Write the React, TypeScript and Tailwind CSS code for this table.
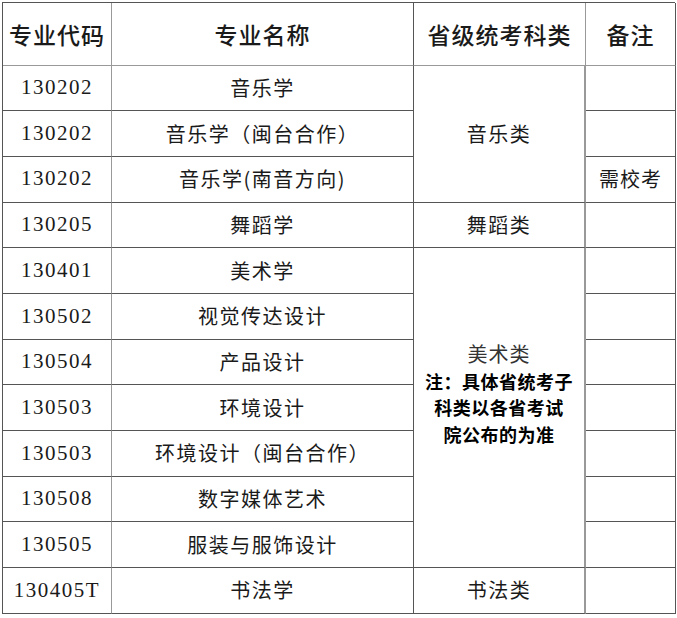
import React from "react"

type Row = {
  code: string
  name: string
  category?: React.ReactNode
  span?: string
  note?: string
}

const cjk = "font-['Noto_Sans_CJK_SC',sans-serif]"
const cell = "flex items-center justify-center border-r border-b border-[#555]"

const rows: Row[] = [
  { code: "130202", name: "音乐学", category: "音乐类", span: "row-span-3" },
  { code: "130202", name: "音乐学（闽台合作）" },
  { code: "130202", name: "音乐学(南音方向)", note: "需校考" },
  { code: "130205", name: "舞蹈学", category: "舞蹈类", span: "row-span-1" },
  {
    code: "130401",
    name: "美术学",
    category: (
      <div className="flex flex-col items-center pb-[28px]">
        <span className="text-[20px] leading-[28px] tracking-[1px] text-[#333]">美术类</span>
        <span className="text-[18px] font-bold leading-[26.5px] tracking-[0.5px] text-black">
          注：具体省统考子
          <br />
          科类以各省考试
          <br />
          院公布的为准
        </span>
      </div>
    ),
    span: "row-span-7",
  },
  { code: "130502", name: "视觉传达设计" },
  { code: "130504", name: "产品设计" },
  { code: "130503", name: "环境设计" },
  { code: "130503", name: "环境设计（闽台合作）" },
  { code: "130508", name: "数字媒体艺术" },
  { code: "130505", name: "服装与服饰设计" },
  { code: "130405T", name: "书法学", category: "书法类", span: "row-span-1" },
]

export default function App() {
  return (
    <div className="h-[618px] w-[677px] bg-white pl-[2px] pt-[2px]">
      <div
        className={`grid w-[673px] grid-cols-[109px_302px_172px_90px] grid-rows-[62.5px_repeat(12,45.7px)] border-l border-t border-[#555] text-[#1a1a1a] ${cjk}`}
      >
        <div className={`${cell} border-r-[#999] border-b-[#999] text-[23px] font-medium tracking-[1px]`}>专业代码</div>
        <div className={`${cell} border-b-[#999] text-[23px] font-medium tracking-[1px]`}>专业名称</div>
        <div className={`${cell} border-r-[#999] border-b-[#999] text-[23px] font-medium tracking-[1px]`}>省级统考科类</div>
        <div className={`${cell} border-b-[#999] text-[23px] font-medium tracking-[1px]`}>备注</div>

        {rows.map((r, i) => (
          <React.Fragment key={i}>
            <div className={`${cell} border-r-[#999] font-['Liberation_Serif',serif] text-[21px] tracking-[1.5px]`}>
              {r.code}
            </div>
            <div className={`${cell} text-[20px] tracking-[1.5px]`}>{r.name}</div>
            {r.category !== undefined && (
              <div className={`${cell} ${r.span} border-r-2 border-r-[#999] text-center text-[20px] tracking-[1.5px]`}>
                {r.category}
              </div>
            )}
            <div className={`${cell} text-[20px] tracking-[1px]`}>{r.note}</div>
          </React.Fragment>
        ))}
      </div>
    </div>
  )
}
